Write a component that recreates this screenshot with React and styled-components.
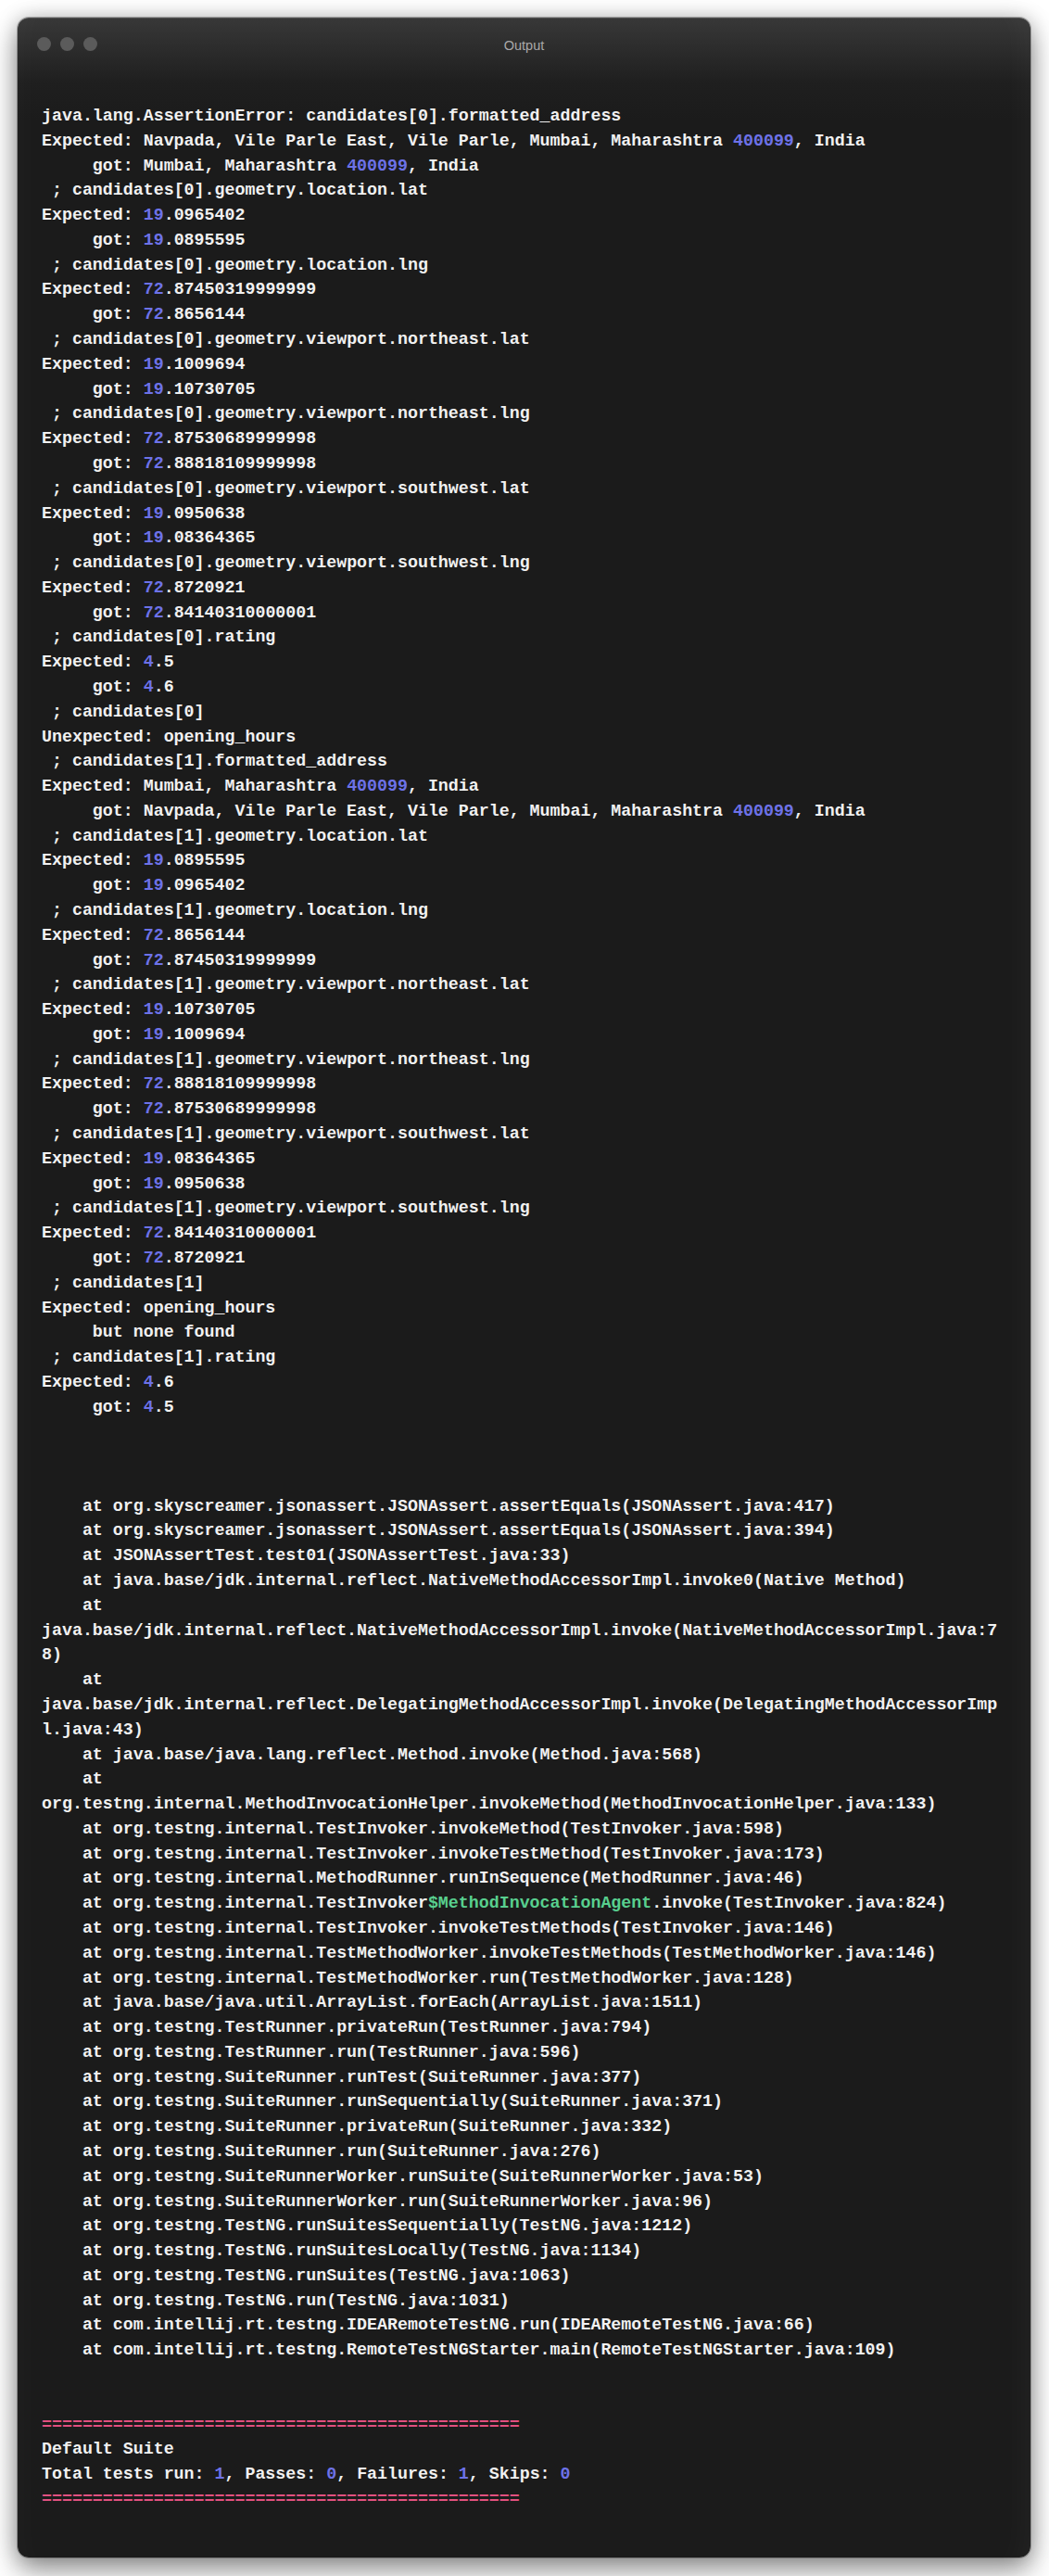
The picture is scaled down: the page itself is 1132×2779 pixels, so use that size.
import React from 'react';
import styled, { createGlobalStyle } from 'styled-components';

const GlobalStyle = createGlobalStyle`
  html, body {
    margin: 0;
    background: #ffffff;
  }
`;

const output = [
  'java.lang.AssertionError: candidates[0].formatted_address',
  'Expected: Navpada, Vile Parle East, Vile Parle, Mumbai, Maharashtra 400099, India',
  '     got: Mumbai, Maharashtra 400099, India',
  ' ; candidates[0].geometry.location.lat',
  'Expected: 19.0965402',
  '     got: 19.0895595',
  ' ; candidates[0].geometry.location.lng',
  'Expected: 72.87450319999999',
  '     got: 72.8656144',
  ' ; candidates[0].geometry.viewport.northeast.lat',
  'Expected: 19.1009694',
  '     got: 19.10730705',
  ' ; candidates[0].geometry.viewport.northeast.lng',
  'Expected: 72.87530689999998',
  '     got: 72.88818109999998',
  ' ; candidates[0].geometry.viewport.southwest.lat',
  'Expected: 19.0950638',
  '     got: 19.08364365',
  ' ; candidates[0].geometry.viewport.southwest.lng',
  'Expected: 72.8720921',
  '     got: 72.84140310000001',
  ' ; candidates[0].rating',
  'Expected: 4.5',
  '     got: 4.6',
  ' ; candidates[0]',
  'Unexpected: opening_hours',
  ' ; candidates[1].formatted_address',
  'Expected: Mumbai, Maharashtra 400099, India',
  '     got: Navpada, Vile Parle East, Vile Parle, Mumbai, Maharashtra 400099, India',
  ' ; candidates[1].geometry.location.lat',
  'Expected: 19.0895595',
  '     got: 19.0965402',
  ' ; candidates[1].geometry.location.lng',
  'Expected: 72.8656144',
  '     got: 72.87450319999999',
  ' ; candidates[1].geometry.viewport.northeast.lat',
  'Expected: 19.10730705',
  '     got: 19.1009694',
  ' ; candidates[1].geometry.viewport.northeast.lng',
  'Expected: 72.88818109999998',
  '     got: 72.87530689999998',
  ' ; candidates[1].geometry.viewport.southwest.lat',
  'Expected: 19.08364365',
  '     got: 19.0950638',
  ' ; candidates[1].geometry.viewport.southwest.lng',
  'Expected: 72.84140310000001',
  '     got: 72.8720921',
  ' ; candidates[1]',
  'Expected: opening_hours',
  '     but none found',
  ' ; candidates[1].rating',
  'Expected: 4.6',
  '     got: 4.5',
  '',
  '',
  '',
  '    at org.skyscreamer.jsonassert.JSONAssert.assertEquals(JSONAssert.java:417)',
  '    at org.skyscreamer.jsonassert.JSONAssert.assertEquals(JSONAssert.java:394)',
  '    at JSONAssertTest.test01(JSONAssertTest.java:33)',
  '    at java.base/jdk.internal.reflect.NativeMethodAccessorImpl.invoke0(Native Method)',
  '    at java.base/jdk.internal.reflect.NativeMethodAccessorImpl.invoke(NativeMethodAccessorImpl.java:78)',
  '    at java.base/jdk.internal.reflect.DelegatingMethodAccessorImpl.invoke(DelegatingMethodAccessorImpl.java:43)',
  '    at java.base/java.lang.reflect.Method.invoke(Method.java:568)',
  '    at org.testng.internal.MethodInvocationHelper.invokeMethod(MethodInvocationHelper.java:133)',
  '    at org.testng.internal.TestInvoker.invokeMethod(TestInvoker.java:598)',
  '    at org.testng.internal.TestInvoker.invokeTestMethod(TestInvoker.java:173)',
  '    at org.testng.internal.MethodRunner.runInSequence(MethodRunner.java:46)',
  '    at org.testng.internal.TestInvoker$MethodInvocationAgent.invoke(TestInvoker.java:824)',
  '    at org.testng.internal.TestInvoker.invokeTestMethods(TestInvoker.java:146)',
  '    at org.testng.internal.TestMethodWorker.invokeTestMethods(TestMethodWorker.java:146)',
  '    at org.testng.internal.TestMethodWorker.run(TestMethodWorker.java:128)',
  '    at java.base/java.util.ArrayList.forEach(ArrayList.java:1511)',
  '    at org.testng.TestRunner.privateRun(TestRunner.java:794)',
  '    at org.testng.TestRunner.run(TestRunner.java:596)',
  '    at org.testng.SuiteRunner.runTest(SuiteRunner.java:377)',
  '    at org.testng.SuiteRunner.runSequentially(SuiteRunner.java:371)',
  '    at org.testng.SuiteRunner.privateRun(SuiteRunner.java:332)',
  '    at org.testng.SuiteRunner.run(SuiteRunner.java:276)',
  '    at org.testng.SuiteRunnerWorker.runSuite(SuiteRunnerWorker.java:53)',
  '    at org.testng.SuiteRunnerWorker.run(SuiteRunnerWorker.java:96)',
  '    at org.testng.TestNG.runSuitesSequentially(TestNG.java:1212)',
  '    at org.testng.TestNG.runSuitesLocally(TestNG.java:1134)',
  '    at org.testng.TestNG.runSuites(TestNG.java:1063)',
  '    at org.testng.TestNG.run(TestNG.java:1031)',
  '    at com.intellij.rt.testng.IDEARemoteTestNG.run(IDEARemoteTestNG.java:66)',
  '    at com.intellij.rt.testng.RemoteTestNGStarter.main(RemoteTestNGStarter.java:109)',
  '',
  '',
  '===============================================',
  'Default Suite',
  'Total tests run: 1, Passes: 0, Failures: 1, Skips: 0',
  '===============================================',
];

// split a line into plain / number / variable / rule pieces
function tokenize(text) {
  if (/^=+$/.test(text)) return [{ kind: 'rule', text }];
  const parts = [];
  const re = /(\$[A-Za-z]+)|(?<=\s)(\d+)/g;
  let last = 0;
  let m;
  while ((m = re.exec(text)) !== null) {
    if (m.index > last) parts.push({ kind: 'plain', text: text.slice(last, m.index) });
    parts.push({ kind: m[1] ? 'variable' : 'number', text: m[0] });
    last = m.index + m[0].length;
  }
  if (last < text.length) parts.push({ kind: 'plain', text: text.slice(last) });
  return parts;
}

const tokenColors = {
  plain: '#f1f1f1',
  number: '#6d72e8',
  variable: '#58cf8e',
  rule: '#e2507f',
};

export default function App() {
  return (
    <Page>
      <GlobalStyle />
      <Window>
        <TitleBar>
          <Lights>
            <Light />
            <Light />
            <Light />
          </Lights>
          <Title>Output</Title>
        </TitleBar>
        <Console>
          {output.map((line, i) => (
            <Line key={i}>
              {tokenize(line).map((t, j) => (
                <Token key={j} $kind={t.kind}>{t.text}</Token>
              ))}
            </Line>
          ))}
        </Console>
      </Window>
    </Page>
  );
}

const Page = styled.div`
  padding: 19px 20px 20px 19px;
  background: #ffffff;
`;

const Window = styled.div`
  width: 1093px;
  border-radius: 12px;
  overflow: hidden;
  background: linear-gradient(180deg, #383838 0px, #1f1f1f 70px, #1b1b1b 110px, #1b1b1b 100%);
  box-shadow:
    0 0 0 1px rgba(0, 0, 0, 0.25),
    inset 0 1px 0 rgba(255, 255, 255, 0.12),
    inset -30px 0 40px -30px rgba(255, 255, 255, 0.05),
    inset 30px 0 40px -30px rgba(255, 255, 255, 0.03),
    0 0 22px rgba(0, 0, 0, 0.22),
    0 14px 30px rgba(0, 0, 0, 0.4);
`;

const TitleBar = styled.div`
  position: relative;
  height: 56px;
  display: flex;
  align-items: center;
  justify-content: center;
`;

const Lights = styled.div`
  position: absolute;
  left: 21px;
  top: 21px;
  display: flex;
  gap: 10px;
`;

const Light = styled.span`
  width: 15px;
  height: 15px;
  border-radius: 50%;
  background: #5b5b5b;
`;

const Title = styled.div`
  font-family: "Liberation Sans", Arial, sans-serif;
  font-size: 14.5px;
  color: #a9a9a9;
  margin-top: 4px;
`;

const Console = styled.div`
  padding: 37px 27px 49px 26px;
  font-family: "Liberation Mono", "Courier New", monospace;
  font-size: 18.3px;
  font-weight: 700;
  line-height: 26.78px;
  white-space: pre-wrap;
  overflow-wrap: anywhere;
`;

const Line = styled.div`
  min-height: 26.78px;
`;

const Token = styled.span`
  color: ${(p) => tokenColors[p.$kind]};
`;
